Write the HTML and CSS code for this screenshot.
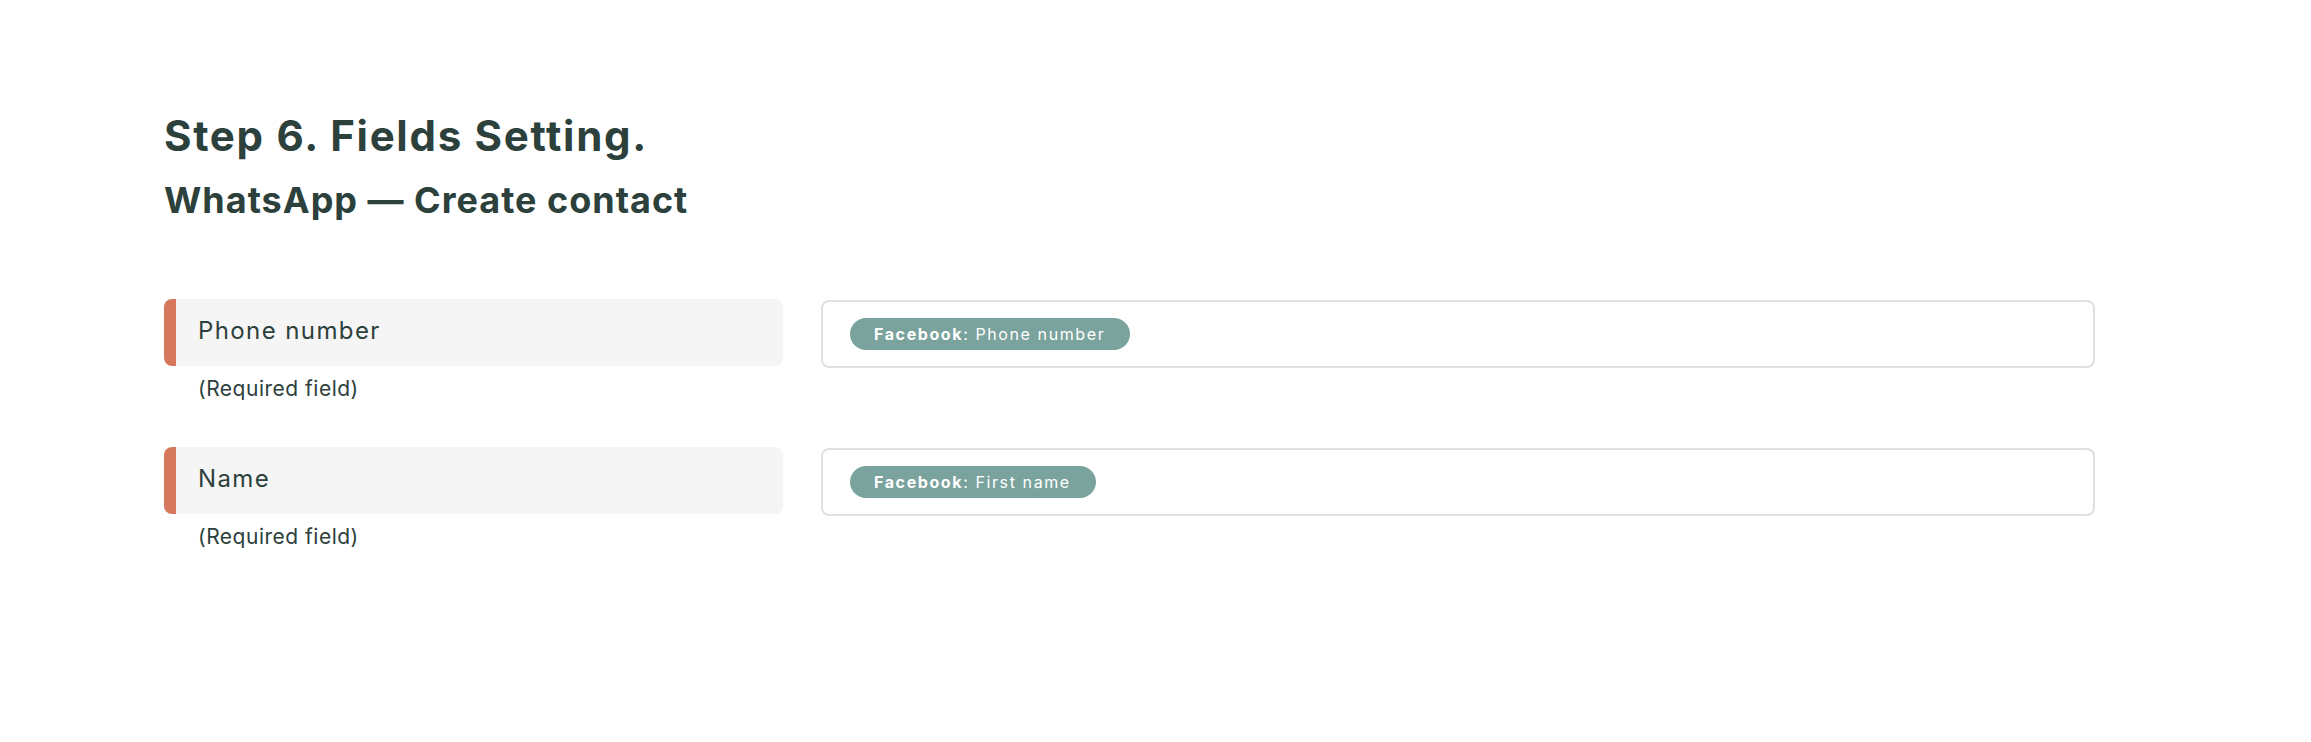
FILE: index.html
```html
<!DOCTYPE html>
<html>
<head>
  <title>Fields Setting</title>
  <link rel="stylesheet" href="styles.css">
</head>
<body>
  <main class="page">
    <h1 class="title">Step 6. Fields Setting.</h1>
    <h2 class="subtitle">WhatsApp — Create contact</h2>

    <div class="fields">
      <div class="field-row">
        <div class="field-label">
          <div class="label-box">Phone number</div>
          <p class="label-note">(Required field)</p>
        </div>
        <div class="field-input">
          <span class="chip"><b>Facebook</b>: Phone number</span>
        </div>
      </div>

      <div class="field-row">
        <div class="field-label">
          <div class="label-box">Name</div>
          <p class="label-note">(Required field)</p>
        </div>
        <div class="field-input">
          <span class="chip"><b>Facebook</b>: First name</span>
        </div>
      </div>
    </div>
  </main>
</body>
</html>
```

FILE: styles.css
```css
body {
  font-family: 'Inter', 'Noto Sans', sans-serif;
  background: #fff;
  color: #2c403c;
  margin: 0;
  padding: 0;
}

.page {
  padding: 111px 216px 0 164px;
}

.title {
  font-size: 42px;
  line-height: 50px;
  font-weight: 700;
  letter-spacing: 1.7px;
  margin: 0;
}

.subtitle {
  font-size: 36px;
  line-height: 44px;
  font-weight: 700;
  letter-spacing: 1px;
  margin: 17px 0 0;
}

.fields {
  display: flex;
  flex-direction: column;
  gap: 46px;
  margin-top: 77px;
}

.field-row {
  display: grid;
  grid-template-columns: 619px 1fr;
  gap: 38px;
  align-items: start;
}

.label-box {
  display: flex;
  align-items: center;
  height: 67px;
  padding: 0 0 4px 22px;
  box-sizing: border-box;
  background: #f5f5f5;
  border-left: 12px solid #d5785c;
  border-radius: 8px;
  font-size: 24px;
  letter-spacing: 1.4px;
}

.label-note {
  font-size: 21px;
  line-height: 24px;
  letter-spacing: 0.5px;
  margin: 11px 0 0 34px;
}

.field-input {
  display: flex;
  align-items: center;
  height: 64px;
  margin-top: 1px;
  padding-left: 27px;
  border: 2px solid #e0e0e0;
  border-radius: 8px;
}

.chip {
  display: inline-flex;
  align-items: center;
  height: 32px;
  padding: 0 25px 0 24px;
  background: #7ba39e;
  color: #fff;
  border-radius: 16px;
  font-size: 16px;
  letter-spacing: 1.6px;
}

.chip b {
  font-weight: 700;
}
```
